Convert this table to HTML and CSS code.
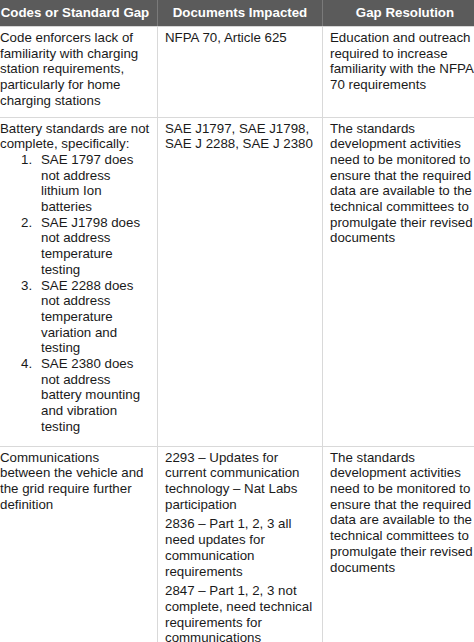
FILE: index.html
```html
<!DOCTYPE html>
<html>
<head>
<meta charset="utf-8">
<link rel="stylesheet" href="styles.css">
</head>
<body>
<table class="gaps">
  <colgroup><col class="c"><col class="c"><col class="c"></colgroup>
  <thead>
    <tr>
      <th>Codes or Standard Gap</th>
      <th>Documents Impacted</th>
      <th>Gap Resolution</th>
    </tr>
  </thead>
  <tbody>
    <tr>
      <td><p>Code enforcers lack of familiarity with charging station requirements, particularly for home charging stations</p></td>
      <td><p>NFPA 70, Article 625</p></td>
      <td><p>Education and outreach required to increase familiarity with the NFPA 70 requirements</p></td>
    </tr>
    <tr>
      <td>
        <p class="tight">Battery standards are not complete, specifically:</p>
        <ol class="nums">
          <li><span>SAE 1797 does not address lithium Ion batteries</span></li>
          <li><span>SAE J1798 does not address temperature testing</span></li>
          <li><span>SAE 2288 does not address temperature variation and testing</span></li>
          <li><span>SAE 2380 does not address battery mounting and vibration testing</span></li>
        </ol>
      </td>
      <td><p>SAE J1797, SAE J1798, SAE J 2288, SAE J 2380</p></td>
      <td><p>The standards development activities need to be monitored to ensure that the required data are available to the technical committees to promulgate their revised documents</p></td>
    </tr>
    <tr>
      <td><p>Communications between the vehicle and the grid require further definition</p></td>
      <td>
        <p>2293 – Updates for current communication technology – Nat Labs participation</p>
        <p>2836 – Part 1, 2, 3 all need updates for communication requirements</p>
        <p>2847 – Part 1, 2, 3 not complete, need technical requirements for communications</p>
      </td>
      <td><p>The standards development activities need to be monitored to ensure that the required data are available to the technical committees to promulgate their revised documents</p></td>
    </tr>
  </tbody>
</table>
</body>
</html>
```

FILE: styles.css
```css
html, body {
  margin: 0;
  padding: 0;
  background: #ffffff;
  overflow: hidden;
}

.gaps {
  margin-left: -8px;
  width: 495px;
  table-layout: fixed;
  border-collapse: collapse;
  font-family: "Liberation Sans", Arial, sans-serif;
  font-size: 13.3px;
  line-height: 15.7px;
  color: #1a1a1a;
}

.gaps .c {
  width: 165px;
}

.gaps th {
  background: #5b5b5b;
  color: #ffffff;
  font-weight: bold;
  text-align: center;
  height: 26px;
  padding: 0 4px;
  border-left: 1px solid #7a7a7a;
  border-right: 1px solid #7a7a7a;
  border-bottom: 1px solid #d6d6d6;
  white-space: nowrap;
}

.gaps td {
  vertical-align: top;
  padding: 3px 7px 4px 7px;
  border: 1px solid #d9d9d9;
}

.gaps p {
  margin: 0 0 4px 0;
}

.gaps p.tight {
  margin: 0;
}

.nums {
  list-style: none;
  margin: 0 0 7px 0;
  padding: 0 0 0 21px;
  counter-reset: n;
}

.nums li {
  display: flex;
  counter-increment: n;
}

.nums li::before {
  content: counter(n) ".";
  flex: 0 0 20px;
}

.nums li span {
  flex: 1 1 auto;
}
```
